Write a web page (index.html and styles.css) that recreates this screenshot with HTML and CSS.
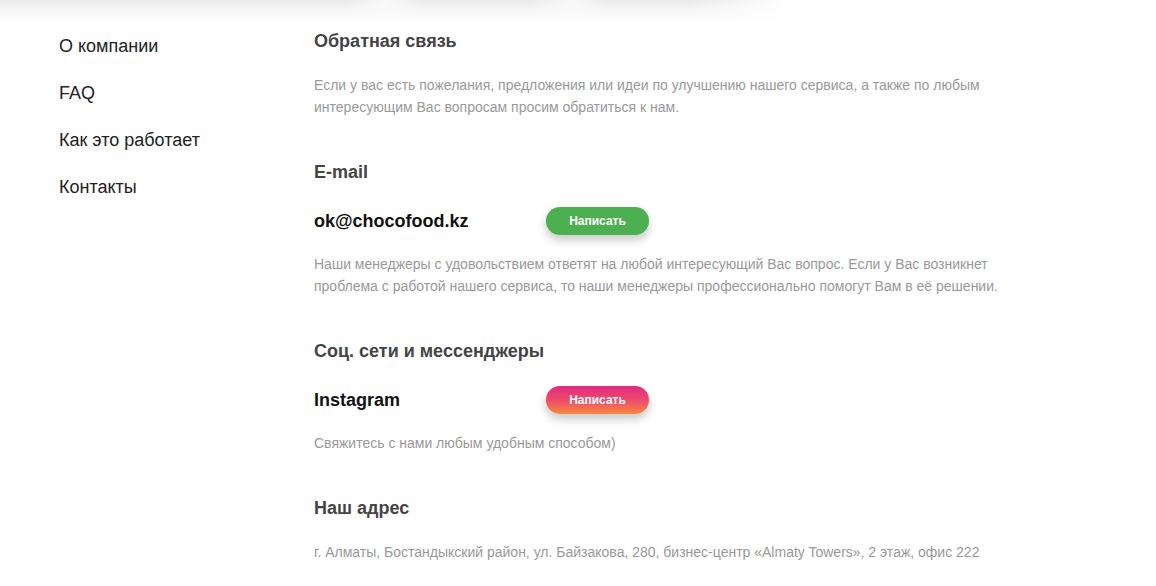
FILE: index.html
```html
<!DOCTYPE html>
<html lang="ru">
<head>
<meta charset="utf-8">
<title>Контакты</title>
<link rel="stylesheet" href="styles.css">
</head>
<body>
<div class="page">
  <nav class="side">
    <a class="side-link" href="#">О компании</a>
    <a class="side-link" href="#">FAQ</a>
    <a class="side-link" href="#">Как это работает</a>
    <a class="side-link" href="#">Контакты</a>
  </nav>
  <main class="content">
    <section class="block">
      <h2 class="block-title">Обратная связь</h2>
      <p class="text">Если у вас есть пожелания, предложения или идеи по улучшению нашего сервиса, а также по любым интересующим Вас вопросам просим обратиться к нам.</p>
    </section>
    <section class="block">
      <h2 class="block-title">E-mail</h2>
      <div class="contact-row">
        <span class="contact-label">ok@chocofood.kz</span>
        <a class="btn btn-green" href="#">Написать</a>
      </div>
      <p class="text">Наши менеджеры с удовольствием ответят на любой интересующий Вас вопрос. Если у Вас возникнет проблема с работой нашего сервиса, то наши менеджеры профессионально помогут Вам в её решении.</p>
    </section>
    <section class="block">
      <h2 class="block-title">Соц. сети и мессенджеры</h2>
      <div class="contact-row">
        <span class="contact-label">Instagram</span>
        <a class="btn btn-insta" href="#">Написать</a>
      </div>
      <p class="text">Свяжитесь с нами любым удобным способом)</p>
    </section>
    <section class="block">
      <h2 class="block-title">Наш адрес</h2>
      <p class="text">г. Алматы, Бостандыкский район, ул. Байзакова, 280, бизнес-центр «Almaty Towers», 2 этаж, офис 222</p>
    </section>
  </main>
</div>
</body>
</html>
```

FILE: styles.css
```css
html, body {
  margin: 0;
  padding: 0;
}
body {
  font-family: "Liberation Sans", Arial, sans-serif;
  background-color: #fff;
  background-image:
    linear-gradient(to right, rgba(255,255,255,0) 0, rgba(255,255,255,0) 690px, #fff 790px),
    radial-gradient(ellipse 40px 22px at 385px 0, rgba(255,255,255,0.7), rgba(255,255,255,0)),
    radial-gradient(ellipse 40px 22px at 570px 0, rgba(255,255,255,0.7), rgba(255,255,255,0)),
    linear-gradient(to bottom, #eaeaea 0, #f6f6f6 10px, #fff 24px);
  background-size: 100% 26px;
  background-repeat: no-repeat;
  overflow: hidden;
}
.page {
  display: flex;
  padding: 29px 0 0 59px;
}
.side {
  width: 255px;
  flex: none;
  display: flex;
  flex-direction: column;
  gap: 23px;
  padding-top: 5px;
}
.side-link {
  font-size: 18px;
  line-height: 24px;
  color: #222;
  text-decoration: none;
}
.content {
  width: 720px;
}
.block {
  display: flex;
  flex-direction: column;
  margin-bottom: 42px;
}
.block-title {
  margin: 0 0 21px;
  font-size: 18px;
  line-height: 24px;
  font-weight: bold;
  color: #444;
}
.text {
  margin: 0;
  font-size: 14px;
  line-height: 22px;
  color: #999;
}
.contact-row {
  display: flex;
  align-items: center;
  height: 28px;
  margin: 2px 0 18px;
}
.contact-label {
  width: 232px;
  flex: none;
  font-size: 18px;
  font-weight: bold;
  color: #111;
}
.btn {
  width: 103px;
  height: 28px;
  border-radius: 14px;
  display: flex;
  align-items: center;
  justify-content: center;
  font-size: 12px;
  font-weight: bold;
  color: #fff;
  text-decoration: none;
  box-shadow: 0 5px 10px rgba(0, 0, 0, 0.22);
}
.btn-green {
  background: #4caf50;
}
.btn-insta {
  background: linear-gradient(to bottom, #e02a82 0%, #ee4a6a 50%, #f7893f 100%);
}
```
